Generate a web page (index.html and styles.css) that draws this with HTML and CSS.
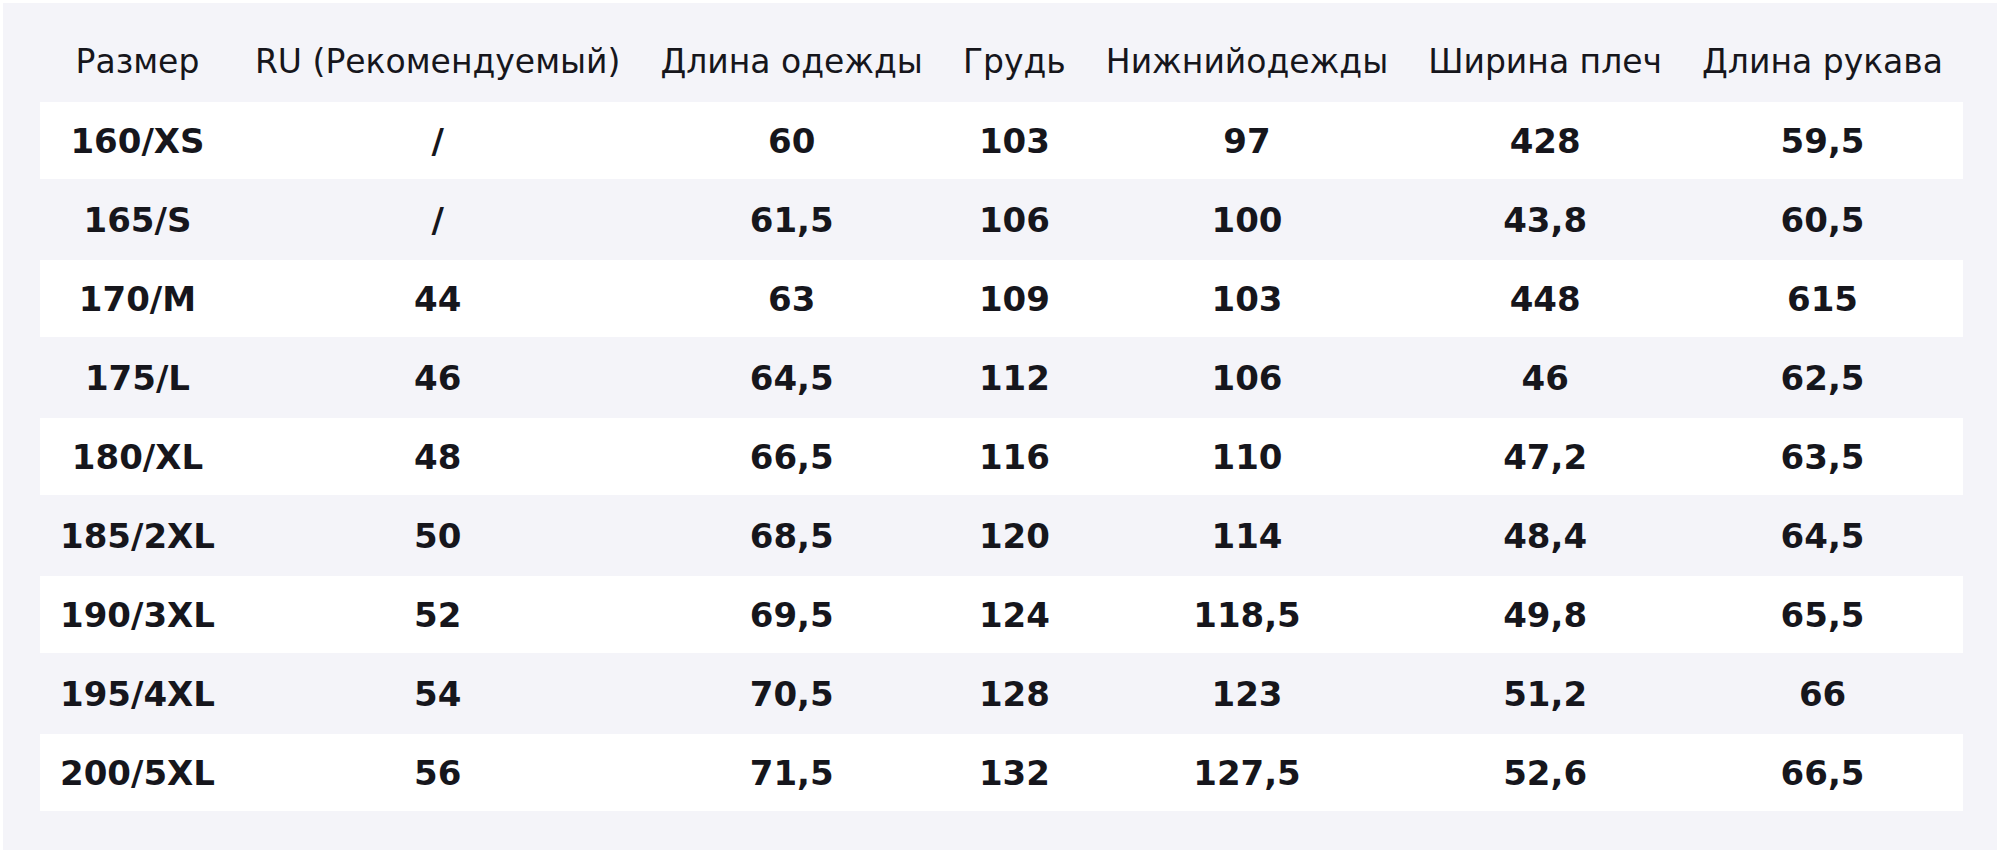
FILE: index.html
```html
<!DOCTYPE html>
<html lang="ru">
<head>
<meta charset="utf-8">
<title>Таблица размеров</title>
<link rel="stylesheet" href="styles.css">
</head>
<body>
<div class="panel">
  <table class="sizes">
    <thead>
      <tr>
        <th>Размер</th>
        <th>RU (Рекомендуемый)</th>
        <th>Длина одежды</th>
        <th>Грудь</th>
        <th>Нижнийодежды</th>
        <th>Ширина плеч</th>
        <th>Длина рукава</th>
      </tr>
    </thead>
    <tbody>
      <tr class="light"><td>160/XS</td><td>/</td><td>60</td><td>103</td><td>97</td><td>428</td><td>59,5</td></tr>
      <tr><td>165/S</td><td>/</td><td>61,5</td><td>106</td><td>100</td><td>43,8</td><td>60,5</td></tr>
      <tr class="light"><td>170/M</td><td>44</td><td>63</td><td>109</td><td>103</td><td>448</td><td>615</td></tr>
      <tr><td>175/L</td><td>46</td><td>64,5</td><td>112</td><td>106</td><td>46</td><td>62,5</td></tr>
      <tr class="light"><td>180/XL</td><td>48</td><td>66,5</td><td>116</td><td>110</td><td>47,2</td><td>63,5</td></tr>
      <tr><td>185/2XL</td><td>50</td><td>68,5</td><td>120</td><td>114</td><td>48,4</td><td>64,5</td></tr>
      <tr class="light"><td>190/3XL</td><td>52</td><td>69,5</td><td>124</td><td>118,5</td><td>49,8</td><td>65,5</td></tr>
      <tr><td>195/4XL</td><td>54</td><td>70,5</td><td>128</td><td>123</td><td>51,2</td><td>66</td></tr>
      <tr class="light"><td>200/5XL</td><td>56</td><td>71,5</td><td>132</td><td>127,5</td><td>52,6</td><td>66,5</td></tr>
    </tbody>
  </table>
</div>
</body>
</html>
```
FILE: styles.css
```css
html, body {
  background: #ffffff;
}
body {
  margin: 3px;
  font-family: "DejaVu Sans", "Noto Sans", sans-serif;
  color: #16161c;
}
.panel {
  background: #f4f4f9;
  padding: 18px 37px 37px;
  height: 847px;
  box-sizing: border-box;
}
.sizes {
  width: 100%;
  border-collapse: separate;
  border-spacing: 0 2px;
  font-size: 33px;
}
.sizes th,
.sizes td {
  height: 77px;
  padding: 0 20px;
  text-align: center;
  vertical-align: middle;
  white-space: nowrap;
  box-sizing: border-box;
}
.sizes th {
  font-weight: normal;
}
.sizes td {
  font-weight: bold;
  font-size: 34px;
}
.sizes tr.light td {
  background: #ffffff;
}
```
